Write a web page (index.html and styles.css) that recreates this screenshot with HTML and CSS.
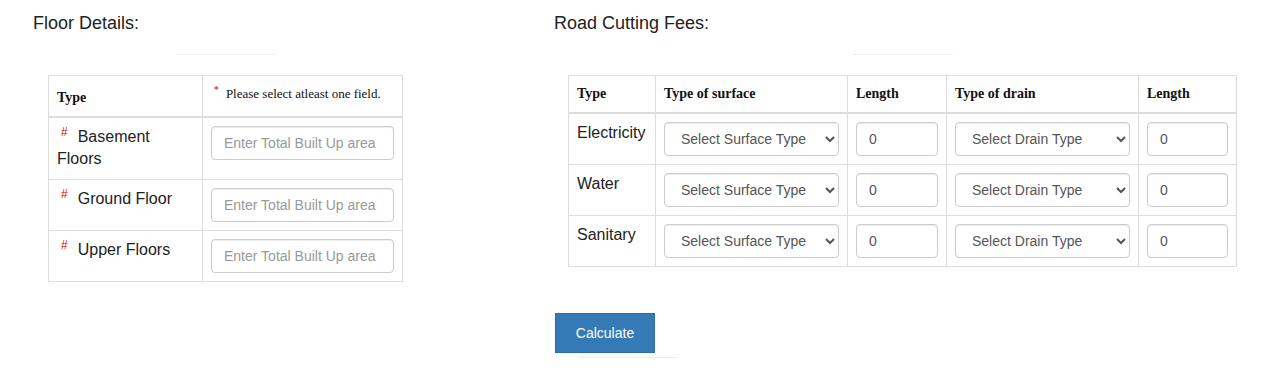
FILE: index.html
```html
<!DOCTYPE html>
<html lang="en">
<head>
<meta charset="utf-8">
<title>Fees</title>
<link rel="stylesheet" href="styles.css">
</head>
<body>
<div class="page">
  <section class="col">
    <h3 class="title">Floor Details:</h3>
    <div class="table-block block-left">
      <hr class="sep">
      <table class="grid">
        <colgroup><col class="w154"><col></colgroup>
        <thead>
          <tr>
            <th>Type</th>
            <th><span class="note"><sup class="req star">*</sup>Please select atleast one field.</span></th>
          </tr>
        </thead>
        <tbody>
          <tr>
            <td class="label"><sup class="req hash">#</sup>Basement Floors</td>
            <td><input class="form-control" type="text" placeholder="Enter Total Built Up area"></td>
          </tr>
          <tr>
            <td class="label"><sup class="req hash">#</sup>Ground Floor</td>
            <td><input class="form-control" type="text" placeholder="Enter Total Built Up area"></td>
          </tr>
          <tr>
            <td class="label"><sup class="req hash">#</sup>Upper Floors</td>
            <td><input class="form-control" type="text" placeholder="Enter Total Built Up area"></td>
          </tr>
        </tbody>
      </table>
    </div>
  </section>

  <section class="col">
    <h3 class="title">Road Cutting Fees:</h3>
    <div class="table-block block-right">
      <hr class="sep">
      <table class="grid">
        <colgroup><col class="w87"><col class="w192"><col class="w99"><col class="w192"><col></colgroup>
        <thead>
          <tr>
            <th>Type</th>
            <th>Type of surface</th>
            <th>Length</th>
            <th>Type of drain</th>
            <th>Length</th>
          </tr>
        </thead>
        <tbody>
          <tr>
            <td class="label">Electricity</td>
            <td><select class="form-control"><option>Select Surface Type</option></select></td>
            <td><input class="form-control" type="text" value="0"></td>
            <td><select class="form-control"><option>Select Drain Type</option></select></td>
            <td><input class="form-control" type="text" value="0"></td>
          </tr>
          <tr>
            <td class="label">Water</td>
            <td><select class="form-control"><option>Select Surface Type</option></select></td>
            <td><input class="form-control" type="text" value="0"></td>
            <td><select class="form-control"><option>Select Drain Type</option></select></td>
            <td><input class="form-control" type="text" value="0"></td>
          </tr>
          <tr>
            <td class="label">Sanitary</td>
            <td><select class="form-control"><option>Select Surface Type</option></select></td>
            <td><input class="form-control" type="text" value="0"></td>
            <td><select class="form-control"><option>Select Drain Type</option></select></td>
            <td><input class="form-control" type="text" value="0"></td>
          </tr>
        </tbody>
      </table>
    </div>
    <div class="actions">
      <button class="btn" type="button">Calculate</button>
      <hr class="sep sep-btn">
    </div>
  </section>
</div>
</body>
</html>
```

FILE: styles.css
```css
html, body {
  margin: 0;
  padding: 0;
  background: #fff;
}

body {
  font-family: "Liberation Sans", Arial, sans-serif;
  font-size: 14px;
  line-height: 1.42857;
  color: #333;
}

.page {
  display: grid;
  grid-template-columns: 521px 712px;
  padding: 13px 0 0 33px;
}

.title {
  margin: 0;
  font-size: 18px;
  line-height: 20px;
  font-weight: normal;
  color: #222;
}

.table-block.block-left {
  margin-left: 15px;
  width: 355px;
}

.table-block.block-right {
  margin-left: 14px;
  width: 669px;
}

.sep {
  width: 100px;
  height: 0;
  margin: 21px auto 20px;
  border: 0;
  border-top: 1px solid #eee;
}

.grid {
  width: 100%;
  border-collapse: collapse;
  border-spacing: 0;
  table-layout: fixed;
  border: 1px solid #ddd;
}

.w154 { width: 154px; }
.w87 { width: 87px; }
.w192 { width: 192px; }
.w99 { width: 99px; }

.grid th,
.grid td {
  padding: 8px;
  border: 1px solid #ddd;
  text-align: left;
  vertical-align: top;
}

.grid th {
  vertical-align: bottom;
  border-bottom: 2px solid #ddd;
  font-family: "Liberation Serif", "Times New Roman", serif;
  font-size: 14px;
  line-height: 20px;
  font-weight: bold;
  color: #111;
}

.note {
  display: block;
  margin-bottom: 4px;
  font-size: 13px;
  font-weight: normal;
}

.req {
  color: #d00;
  font-size: 75%;
  line-height: 0;
  position: relative;
  vertical-align: baseline;
  top: -0.5em;
}

.req.star {
  margin: 0 7px 0 3px;
}

.req.hash {
  margin: 0 10px 0 4px;
}

.grid td.label {
  font-size: 16px;
  line-height: 22.4px;
  color: #222;
}

.form-control {
  display: block;
  box-sizing: border-box;
  width: 100%;
  height: 34px;
  margin: 0;
  padding: 6px 12px;
  font-family: "Liberation Sans", Arial, sans-serif;
  font-size: 14px;
  line-height: 1.42857;
  color: #555;
  background: #fff;
  border: 1px solid #ccc;
  border-radius: 4px;
  box-shadow: inset 0 1px 1px rgba(0, 0, 0, 0.075);
}

.form-control::placeholder {
  color: #999;
  opacity: 1;
}

.actions {
  margin-top: 46px;
}

.btn {
  display: block;
  width: 100px;
  height: 40px;
  margin: 0 0 0 1px;
  padding: 0;
  font-family: "Liberation Sans", Arial, sans-serif;
  font-size: 14px;
  color: #fff;
  background: #337ab7;
  border: 1px solid #2e6da4;
  border-radius: 0;
}

.sep.sep-btn {
  margin: 4px 0 0 24px;
}
```
